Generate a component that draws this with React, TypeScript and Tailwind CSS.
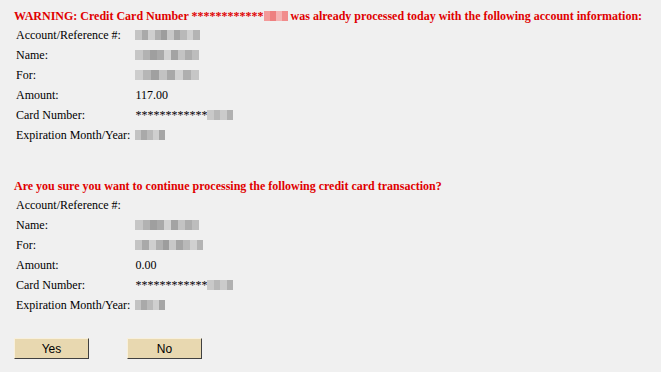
import React from 'react';

const Blur: React.FC<{ w: number; shades: string[] }> = ({ w, shades }) => (
  <span className="inline-flex h-[10px] align-middle" style={{ width: w }}>
    {shades.map((c, i) => (
      <span key={i} className="h-full flex-1" style={{ background: c }} />
    ))}
  </span>
);

const g1 = ['#c4c4c4', '#a9a9a9', '#cfcfcf', '#b0b0b0', '#9d9d9d', '#c8c8c8', '#a5a5a5', '#b9b9b9', '#d0d0d0', '#b4b4b4'];
const g2 = ['#c6c6c6', '#b2b2b2', '#9f9f9f', '#a9a9a9', '#d2d2d2', '#a3a3a3', '#c3c3c3', '#adadad', '#bdbdbd'];
const g3 = ['#cdcdcd', '#b6b6b6', '#a0a0a0', '#c2c2c2', '#a8a8a8', '#d1d1d1', '#afafaf', '#c6c6c6'];
const g4 = ['#c9c9c9', '#b8b8b8', '#cbcbcb', '#b1b1b1'];
const g5 = ['#c3c3c3', '#a9a9a9', '#bababa', '#cfcfcf', '#a6a6a6'];
const pink = ['#f39a9a', '#ee7f7f', '#f5b2b2', '#f18c8c'];

type Row = { label: string; value: React.ReactNode };

const Stars = () => (
  <span className="inline-flex items-center">
    ************
    <Blur w={26} shades={g4} />
  </span>
);

const InfoTable: React.FC<{ rows: Row[] }> = ({ rows }) => (
  <div className="grid grid-cols-[auto_1fr] gap-x-[5px] pl-4 text-[12px] text-black">
    {rows.map((r) => (
      <React.Fragment key={r.label}>
        <div className="h-5 leading-5 whitespace-nowrap">{r.label}</div>
        <div className="h-5 leading-5 flex items-center">{r.value}</div>
      </React.Fragment>
    ))}
  </div>
);

export default function App() {
  const first: Row[] = [
    { label: 'Account/Reference #:', value: <Blur w={64} shades={g1} /> },
    { label: 'Name:', value: <Blur w={64} shades={g2} /> },
    { label: 'For:', value: <Blur w={64} shades={g3} /> },
    { label: 'Amount:', value: '117.00' },
    { label: 'Card Number:', value: <Stars /> },
    { label: 'Expiration Month/Year:', value: <Blur w={30} shades={g5} /> },
  ];
  const second: Row[] = [
    { label: 'Account/Reference #:', value: '' },
    { label: 'Name:', value: <Blur w={64} shades={g2} /> },
    { label: 'For:', value: <Blur w={68} shades={g1} /> },
    { label: 'Amount:', value: '0.00' },
    { label: 'Card Number:', value: <Stars /> },
    { label: 'Expiration Month/Year:', value: <Blur w={30} shades={g5} /> },
  ];

  return (
    <div className="min-h-[372px] w-[661px] bg-[#f0f0f0] font-['Liberation_Serif',serif]">
      <div className="pt-[6px] pl-[14px] h-[25px] text-[12px] font-bold text-[#e00000] whitespace-nowrap flex items-center">
        WARNING: Credit Card Number ************
        <Blur w={24} shades={pink} />
        <span className="ml-[3px]">was already processed today with the following account information:</span>
      </div>
      <InfoTable rows={first} />
      <div className="h-[31px]" />
      <div className="pl-[14px] h-[19px] text-[12px] font-bold text-[#e00000] flex items-center">
        Are you sure you want to continue processing the following credit card transaction?
      </div>
      <InfoTable rows={second} />
      <div className="flex gap-[38px] pl-[14px] pt-[23px]">
        {['Yes', 'No'].map((t) => (
          <button
            key={t}
            className="w-[75px] h-[21px] bg-[#e8d8b0] border border-t-[#f8f0dc] border-l-[#f8f0dc] border-r-[#404040] border-b-[#404040] text-[12px] text-black font-['Liberation_Sans',sans-serif] leading-none"
          >
            {t}
          </button>
        ))}
      </div>
    </div>
  );
}
